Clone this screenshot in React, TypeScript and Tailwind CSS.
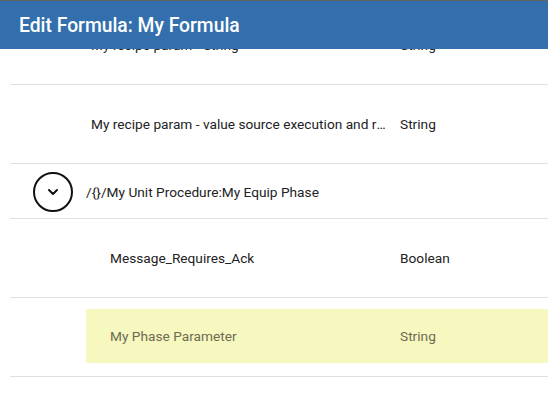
import React from "react";

const font = { fontFamily: "Roboto, 'Liberation Sans', sans-serif" };

function Row({ name, type, indent, highlight, truncate }: { name: string; type: string; indent: number; highlight?: boolean; truncate?: boolean }) {
  return (
    <div className="ml-[10px] h-[79px] border-b border-[#e0e0e0] flex items-center">
      {highlight ? (
        <div className="ml-[76px] mt-[11px] mb-[13px] h-[54px] flex-1 flex items-center bg-[#f7f7c0] text-[#6b6b52]">
          <div className="w-[314px] pl-[24px]">{name}</div>
          <div>{type}</div>
        </div>
      ) : (
        <>
          <div className={`${indent === 81 ? "ml-[81px] w-[309px]" : "ml-[100px] w-[290px]"} ${truncate ? "truncate pr-[10px]" : "pr-[4px]"}`}>{name}</div>
          <div>{type}</div>
        </>
      )}
    </div>
  );
}

export default function App() {
  return (
    <div className="relative w-[548px] h-[405px] overflow-hidden bg-white text-[13.7px] text-[#222]" style={font}>
      <div className="pt-[6px]">
        <Row name="My recipe param - String" type="String" indent={81} />
        <Row name="My recipe param - value source execution and runtime" type="String" indent={81} truncate />
        <div className="ml-[10px] h-[55px] border-b border-[#e0e0e0] flex items-center">
          <div className="ml-[23px] mt-[2px] w-[40px] h-[40px] rounded-full border-2 border-[#111] flex items-center justify-center">
            <svg width="12" height="8" viewBox="0 0 12 8" fill="none">
              <path d="M2 2 L6 6 L10 2" stroke="#111" strokeWidth="2" strokeLinecap="round" strokeLinejoin="round" />
            </svg>
          </div>
          <div className="ml-[13px] mt-[2px]">/{"{}"}/My Unit Procedure:My Equip Phase</div>
        </div>
        <Row name="Message_Requires_Ack" type="Boolean" indent={100} />
        <Row name="My Phase Parameter" type="String" indent={100} highlight />
      </div>
      <div className="absolute top-0 left-0 right-0 h-[49px] border-t border-[#616161] bg-[#336fad] flex items-center pl-[19px]">
        <span className="text-white text-[19.3px] font-medium leading-none mt-[1px]">Edit Formula: My Formula</span>
      </div>
    </div>
  );
}
